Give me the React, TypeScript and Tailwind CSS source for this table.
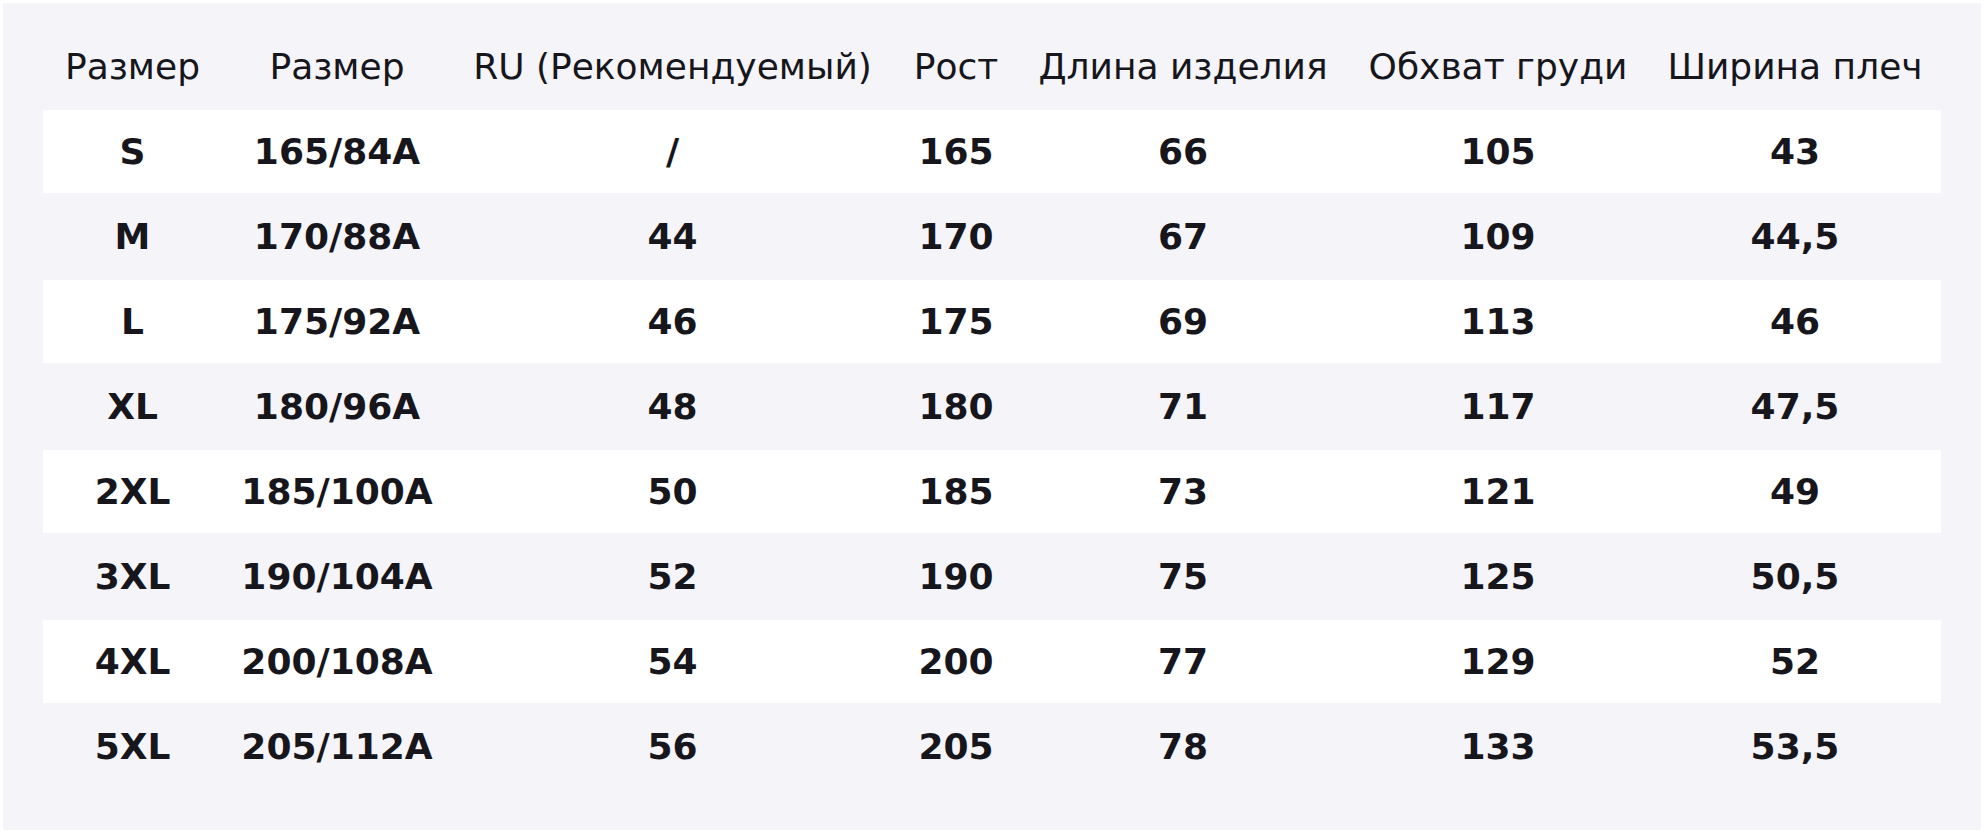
const headers = ['Размер', 'Размер', 'RU (Рекомендуемый)', 'Рост', 'Длина изделия', 'Обхват груди', 'Ширина плеч']

const rows: string[][] = [
  ['S', '165/84A', '/', '165', '66', '105', '43'],
  ['M', '170/88A', '44', '170', '67', '109', '44,5'],
  ['L', '175/92A', '46', '175', '69', '113', '46'],
  ['XL', '180/96A', '48', '180', '71', '117', '47,5'],
  ['2XL', '185/100A', '50', '185', '73', '121', '49'],
  ['3XL', '190/104A', '52', '190', '75', '125', '50,5'],
  ['4XL', '200/108A', '54', '200', '77', '129', '52'],
  ['5XL', '205/112A', '56', '205', '78', '133', '53,5'],
]

const grid = 'grid grid-cols-[179px_230px_441px_126px_328px_302px_292px]'

export default function App() {
  return (
    <div className="w-[1984px] h-[833px] bg-white p-[3px] font-['DejaVu_Sans',sans-serif]">
      <div className="h-[827px] bg-[#f4f4f9] p-10 text-[#16161c]">
        {/* header */}
        <div className={`${grid} h-[67px] items-start pt-[3px]`}>
          {headers.map((h, i) => (
            <div key={i} className="text-[36px] leading-[42px] text-center whitespace-nowrap">
              {h}
            </div>
          ))}
        </div>

        {/* body */}
        {rows.map((row, r) => (
          <div
            key={r}
            className={`${grid} items-center ${r % 2 === 0 ? 'bg-white h-[83px]' : 'bg-[#f4f4f9] h-[87px]'}`}
          >
            {row.map((cell, i) => (
              <div key={i} className="text-[36px] leading-[42px] font-bold text-center whitespace-nowrap">
                {cell}
              </div>
            ))}
          </div>
        ))}
      </div>
    </div>
  )
}
